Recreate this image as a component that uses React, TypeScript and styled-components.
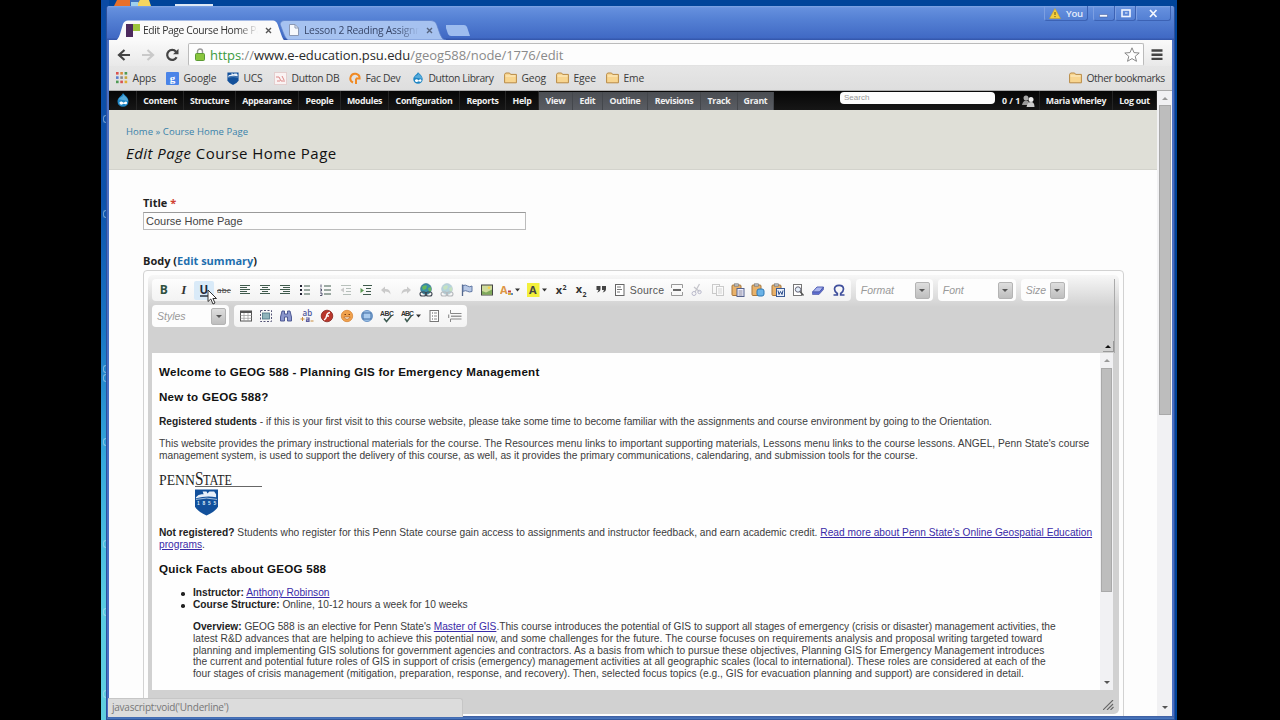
import React from 'react';
import styled, { createGlobalStyle, css } from 'styled-components';

const Global = createGlobalStyle`
  * { box-sizing: border-box; }
  html, body { margin: 0; padding: 0; background: #000; }
  body { width: 1280px; height: 720px; overflow: hidden; font-family: "Open Sans", "Noto Sans", sans-serif; }
  svg { display: block; flex: none; }
`;

/* ---------- desktop and window frame ---------- */
const Screen = styled.div`
  width: 1280px; height: 720px; background: #000; padding-left: 101px; overflow: hidden;
`;
const Desktop = styled.div`
  position: relative; width: 1076px; height: 720px; padding: 6px 0 0 5px; overflow: hidden;
  background: linear-gradient(90deg, transparent 8px, #00449a 8px),
    linear-gradient(#0a4aa4 0, #0c52ab 200px, #1976c4 330px, #35a9dc 460px, #58cbe2 600px, #5fcfe0 100%);
`;
const DesktopIcon = styled.svg` position: absolute; left: 13px; top: 0; `;
const DesktopLabel = styled.div` position: absolute; left: 74px; top: 4px; width: 38px; height: 2px; background: #dfe9f6; `;
const Speck = styled.i<{ $y: number }>`
  position: absolute; left: 2px; top: ${p => p.$y}px; width: 3px; height: 8px;
  border: 1px solid #c9e3f2; border-right: 0; border-radius: 3px 0 0 3px; opacity: .5;
`;
const Window = styled.div`
  position: relative; width: 1069px; height: 714px; display: flex; flex-direction: column;
  border: solid #2c4f9c; border-width: 0 1px; border-radius: 3px 3px 0 0; overflow: hidden;
  background: #4a70c4; padding: 0 2px 0 2px;
`;
const TitleBar = styled.div`
  flex: none; height: 34px; margin: 0 -2px; padding: 14px 0 0 8px; display: flex; align-items: flex-start; position: relative;
  background: linear-gradient(#7fa5e4 0, #6590de 2px, #5682d5 12px, #4069c4 32px, #3558ad 33px);
`;
const Tab = styled.div<{ $active?: boolean; $w: number }>`
  position: relative; width: ${p => p.$w}px; height: 20px; display: flex; align-items: center;
  padding: 0 0 0 11px; font-size: 10.3px; color: ${p => (p.$active ? '#333' : '#39486a')};
  z-index: ${p => (p.$active ? 2 : 1)};
  margin-left: ${p => (p.$active ? 0 : -7)}px;
`;
const TabShape = styled.svg` position: absolute; left: 0; top: 0; z-index: -1; `;
const TabIcon = styled.div<{ $gap: number }>` width: 14px; margin-right: ${p => p.$gap}px; `;
const TabTitle = styled.div<{ $w: number; $ls: number }>`
  width: ${p => p.$w}px; white-space: nowrap; overflow: hidden; letter-spacing: ${p => p.$ls}px;
  mask-image: linear-gradient(90deg, #000 82%, transparent);
`;
const TabClose = styled.svg` margin-left: 7px; `;
const WindowButtons = styled.div`
  position: absolute; right: 3px; top: 0; height: 15px; display: flex; color: #fff;
`;
const WinBtn = styled.div<{ $w: number; $gap?: number }>`
  width: ${p => p.$w}px; margin-right: ${p => p.$gap || 0}px; height: 15px; border: 1px solid #3c62b4; border-top: 0; border-left-color: #7c9fe2;
  border-radius: 0 0 3px 3px; display: flex; align-items: center; justify-content: center; gap: 5px;
  font-size: 9.6px; font-weight: 600; letter-spacing: -.2px; color: #e6eefb; padding-top: 1px;
`;

/* ---------- browser bars ---------- */
const AddressRow = styled.div`
  flex: none; height: 26px; display: flex; align-items: center; background: linear-gradient(#fafafa, #e9e9e9); padding: 3px 0 0 8px;
`;
const NavIcon = styled.svg` margin-right: 10px; `;
const Omnibox = styled.div`
  width: 956px; height: 23px; margin-left: -2px; border: 1px solid #bbb; border-bottom-color: #e2e2e2; border-radius: 2px; background: #fdfdfd;
  display: flex; align-items: center; padding: 0 3px 0 6px;
`;
const Url = styled.div`
  flex: 1; margin-left: 5px; font-size: 13px; line-height: 20px; letter-spacing: -.06px; color: #8a8a8a; white-space: nowrap;
  b { font-weight: 400; color: #3a9a3d; } em { font-style: normal; color: #2a2a2a; }
`;
const Bookmarks = styled.div`
  flex: none; height: 25px; background: linear-gradient(#e6e6e6, #dedede); display: flex; align-items: center;
  border-bottom: 1px solid #aaa; position: relative; padding-left: 7px;
`;
const Bookmark = styled.div<{ $w: number; $ls?: number }>`
  width: ${p => p.$w}px; display: flex; align-items: center; gap: 4.5px; font-size: 10.3px; color: #3b3b3b; white-space: nowrap;
  letter-spacing: ${p => p.$ls || 0}px;
`;
const Spacer = styled.div` flex: 1; `;

/* ---------- page ---------- */
const Viewport = styled.div` flex: 1; min-height: 0; display: flex; background: #fdfdfd; overflow: hidden; `;
const Page = styled.div` width: 1048px; flex: none; overflow: hidden; `;
const AdminBar = styled.div`
  height: 19px; display: flex; background: linear-gradient(#060606, #161616); color: #f0f0f0;
  font: 700 8.8px/20px "Open Sans", "Noto Sans", sans-serif; letter-spacing: -.3px; position: relative;
`;
const AdminHome = styled.div` width: 28px; padding: 2px 0 0 7px; border-right: 1px solid #252525; `;
const AdminItem = styled.div<{ $w: number; $tab?: boolean }>`
  width: ${p => p.$w}px; flex: none; text-align: center; white-space: nowrap;
  border-right: 1px solid #242424;
  ${p => p.$tab && css`background: linear-gradient(#4a4d52, #5a5d63); border-right-color: #44474c; height: 18px; margin-top: 1px; line-height: 18px;`}
`;
const SearchBox = styled.div`
  width: 155px; height: 12px; margin: 1px 7px 0 66px; border-radius: 4px; background: #fcfcfc; color: #999;
  font: 400 8px/12px "Liberation Sans", sans-serif; letter-spacing: 0; padding-left: 4px;
`;
const UserCount = styled.div` width: 38px; display: flex; gap: 2px; align-items: center; border-right: 1px solid #242424; letter-spacing: 0; `;
const PageHeader = styled.div`
  height: 60px; padding: 15px 0 0 17px; background: #dfdfd7; border-bottom: 1px solid #d3d3cc;
`;
const Crumb = styled.div` font-size: 9.5px; line-height: 13px; color: #3a82aa; letter-spacing: .05px; `;
const PageTitle = styled.div` margin-top: 5px; font-size: 15px; line-height: 20px; letter-spacing: .46px; color: #111; `;
const Form = styled.div` padding: 25px 34px 0 34px; `;
const Label = styled.div` font-size: 11px; line-height: 16px; font-weight: 700; color: #222; span { color: #d04030; } a { color: #1f6fae; } `;
const Input = styled.div`
  width: 383px; height: 18px; margin: 1px 0 23px; border: 1px solid #bcbcbc; border-top-color: #9a9a9a; padding-left: 2px; color: #444;
  font: 11px/16px "Liberation Sans", sans-serif; letter-spacing: 0;
`;

/* ---------- editor ---------- */
const EditorFrame = styled.div`
  margin-top: 1px; width: 981px; height: 460px; border: 1px solid #d2d2d2; border-radius: 4px; padding: 4px 4px 0; background: #fdfdfd;
`;
const EditorSkin = styled.div`
  height: 439px; border-radius: 5px; background: linear-gradient(#f7f7f7 0, #d1d1d1 32px, #d1d1d1 100%); padding: 4px 4px 0; 
`;
const ToolArea = styled.div` height: 74px; position: relative; border-right: 1px solid #aaa; `;
const ToolRow = styled.div` display: flex; gap: 5px; height: 22px; margin-bottom: 4px; `;
const Group = styled.div`
  height: 22px; border-radius: 4px; background: linear-gradient(#fdfdfd, #f3f3f3); display: flex; align-items: center; padding: 0 2px;
`;
const Tool = styled.div<{ $w: number; $hot?: boolean; $faded?: boolean }>`
  width: ${p => p.$w}px; height: 19px; display: flex; align-items: center; justify-content: center; gap: 4px; border-radius: 2px;
  opacity: ${p => (p.$faded ? 0.35 : 1)}; background: ${p => (p.$hot ? '#d9eaf8' : 'transparent')};
  font: 10.5px "Liberation Sans", sans-serif; letter-spacing: .2px; color: #555; white-space: nowrap;
`;
const Combo = styled.div<{ $w: number }>`
  width: ${p => p.$w}px; height: 22px; border-radius: 4px; background: #fdfdfd; display: flex; align-items: center; justify-content: space-between;
  padding: 0 3px 0 5px; font: italic 10.5px "Liberation Sans", sans-serif; letter-spacing: 0; color: #999;
`;
const ComboArrow = styled.div`
  width: 15px; height: 17px; border: 1px solid #b4b4b4; border-radius: 2px; background: linear-gradient(#dedede, #bebebe);
  display: flex; align-items: center; justify-content: center;
`;
const Down = styled.i` border: 3px solid transparent; border-top: 3px solid #555; border-bottom: 0; `;
const Up = styled.i<{ $c: string }>` border: 3px solid transparent; border-bottom: 3px solid ${p => p.$c}; border-top: 0; `;
const Collapse = styled.div`
  position: absolute; right: 0; bottom: 1px; width: 11px; height: 11px; border: solid #999; border-width: 0 1px 1px 0;
  display: flex; align-items: center; justify-content: center;
`;
const Canvas = styled.div`
  height: 337px; width: 961px; background: #fefefe; display: flex; overflow: hidden;
`;
const Doc = styled.div`
  width: 948px; padding: 11px 0 0 7px; color: #3c3c3c; font: 10.2px/11.9px "Liberation Sans", sans-serif;
  b { color: #222; } a { color: #3a2ba8; text-decoration: underline; }
`;
const Heading = styled.div<{ $mt?: number }>`
  font-size: 11.6px; line-height: 16px; font-weight: 700; color: #111; margin-top: ${p => p.$mt || 0}px; letter-spacing: .24px;
`;
const Para = styled.div<{ $mt: number; $indent?: number }>` margin-top: ${p => p.$mt}px; padding-left: ${p => p.$indent || 0}px; `;
const Line = styled.div<{ $ls?: number }>` height: 11.9px; white-space: nowrap; letter-spacing: ${p => p.$ls || 0}px; `;
const Item = styled(Line)`
  padding-left: 34px; position: relative;
  &::before { content: ''; position: absolute; left: 22px; top: 5px; width: 3.5px; height: 3.5px; border-radius: 50%; background: #222; }
`;
const Scroll = styled.div<{ $w: number }>`
  width: ${p => p.$w}px; flex: none; background: #f1f1f3; display: flex; flex-direction: column; align-items: center; 
`;
const ScrollEnd = styled.div<{ $h: number }>` height: ${p => p.$h}px; display: flex; align-items: center; `;
const Thumb = styled.div<{ $h: number; $w: number }>` width: ${p => p.$w}px; height: ${p => p.$h}px; background: #bdbdbd; border: 1px solid #a9a9a9; `;
const ResizeRow = styled.div` height: 22px; display: flex; justify-content: flex-end; align-items: flex-end; padding: 0 1px 2px 0; `;
const StatusBubble = styled.div`
  position: absolute; left: 1px; bottom: 3px; width: 355px; height: 19px; background: #dcdcdc; border: solid #c6c6c6; border-width: 1px 1px 0 0;
  border-radius: 0 3px 0 0; padding-left: 4px; font-size: 10px; line-height: 17px; letter-spacing: -.24px; color: #777; white-space: nowrap;
`;
const Cursor = styled.svg` position: absolute; left: 100px; top: 283px; z-index: 5; `;
const BottomEdge = styled.div` flex: none; height: 4px; margin: 0 -2px; background: linear-gradient(#3d5c9e, #4a78c0 60%, #24488c); `;

/* ---------- icon drawings ---------- */
const Drop = ({ s = 14 }: { s?: number }) => (
  <svg width={s} height={s} viewBox="0 0 14 14">
    <path d="M7 0C8 2 12.5 4 12.5 8.4A5.5 5.3 0 0 1 1.5 8.4C1.5 4.5 6 3 7 0Z" fill="#1f86c4" />
    <path d="M2.6 6.3C4 3.8 7 4.6 7.6 1.5 9 4 12 5 12 8Z" fill="#6cb9e4" opacity=".7" />
    <path d="M3.4 9.6C5 7.6 6.5 9 7.5 9.8 8.7 9 10 7.6 11 9.3 11.5 12 8.8 11.4 7.6 10.8 6 12 3.6 12.2 3.4 9.6Z" fill="#fff" />
  </svg>
);
const Folder = () => (
  <svg width="13" height="12" viewBox="0 0 13 12">
    <path d="M.6 10.8V2.3L1.6 1h4l1 1.4h5.8v8.4Z" fill="#f8d58f" stroke="#b98a45" /><path d="M1.5 4h10" stroke="#fdeec9" />
  </svg>
);
const Shield = ({ w, h }: { w: number; h: number }) => (
  <svg width={w} height={h} viewBox="0 0 24 28">
    <path d="M0 1H24V19Q21 24 12 28Q3 24 0 19Z" fill="#12509b" />
    <path d="M1 9Q4 5 9 6L8 3H12L13 5L15 3H20L22 6V9Q12 7 1 10Z" fill="#e8f0fa" />
    <path d="M1 11.3Q12 8.5 23 11.3" stroke="#cfe0f2" fill="none" strokeWidth=".8" />
    {w > 14 && <text x="2" y="17" fontSize="5" fontWeight="700" textLength="20" fill="#dbe8f6" fontFamily="Liberation Sans">1855</text>}
  </svg>
);
const PsuLogo = () => (
  <svg width="106" height="48" viewBox="0 0 106 48">
    <g fontFamily="Liberation Serif, serif" fill="#1e1e1e">
      <text x="0" y="14.5" fontSize="14.5" textLength="36" lengthAdjust="spacingAndGlyphs">PENN</text>
      <text x="36" y="14.5" fontSize="18" textLength="8.5" lengthAdjust="spacingAndGlyphs">S</text>
      <text x="44" y="14.5" fontSize="14.5" textLength="29" lengthAdjust="spacingAndGlyphs">TATE</text>
    </g>
    <path d="M36 16.5H103" stroke="#555" strokeWidth=".9" />
    <g transform="translate(36 18)"><Shield w={23} h={28} /></g>
  </svg>
);

const G = '#3f5a4c';
const S = ({ children, w = 14 }: { children: React.ReactNode; w?: number }) => (
  <svg width={w} height="14" viewBox={`0 0 ${w} 14`} fill="none" strokeWidth="1">{children}</svg>
);
const Letter = ({ t, x = 7, y = 11.2, size = 12, fill = '#333', weight = 700, italic = false, font = 'Open Sans' }: any) => (
  <text x={x} y={y} fontSize={size} fontWeight={weight} fontStyle={italic ? 'italic' : 'normal'} fill={fill} textAnchor="middle" fontFamily={font}>{t}</text>
);
const Clip = ({ badge }: { badge: React.ReactNode }) => (
  <S><rect x="1" y="2" width="9" height="10.5" rx="1" fill="#e9b26a" stroke="#a8763a" /><rect x="3.5" y=".8" width="4" height="2.4" fill="#bbb" stroke="#777" strokeWidth=".6" />{badge}</S>
);
const lines = (rows: [number, number, number][], c = G) => rows.map(([x1, x2, y]) => <path key={y} d={`M${x1} ${y}H${x2}`} stroke={c} />);
const Caret = ({ x }: { x: number }) => <path d={`M${x} 5.5h5l-2.5 3z`} fill="#333" />;

const icons: Record<string, React.ReactNode> = {
  bold: <S><Letter t="B" fill="#2f5040" /></S>,
  italic: <S><Letter t="I" italic font="Liberation Serif" size={13} /></S>,
  underline: <S><Letter t="U" fill="#1c2838" size={11.5} /><path d="M3 13H11" stroke="#1c2838" strokeWidth="1.4" /></S>,
  strike: <S><Letter t="abc" size={8} weight={400} y={9.5} /><path d="M0 7.500H14" stroke="#444" strokeWidth=".8" /></S>,
  left: <S>{lines([[2, 12, 2.5], [2, 9, 4.5], [2, 12, 6.5], [2, 9, 8.5], [2, 12, 10.5]])}</S>,
  center: <S>{lines([[2, 12, 2.5], [4, 10, 4.5], [2, 12, 6.5], [4, 10, 8.5], [2, 12, 10.5]])}</S>,
  right: <S>{lines([[2, 12, 2.5], [5, 12, 4.5], [2, 12, 6.5], [5, 12, 8.5], [2, 12, 10.5]])}</S>,
  bullets: <S>{lines([[6, 12, 3], [6, 12, 7], [6, 12, 11]])}<path d="M2 3h2M2 7h2M2 11h2" stroke="#223" strokeWidth="2" /></S>,
  numbers: <S>{lines([[6, 13, 3], [6, 13, 7], [6, 13, 11]])}<path d="M3 1.5v3M2 6h1.5v2H2M2 10h2v2.5H2" stroke="#335" strokeWidth=".8" /></S>,
  outdent: <S>{lines([[2, 12, 2.5], [7, 12, 5.5], [7, 12, 8.5], [4, 12, 11.5]])}<path d="M5 4.5v5L1.5 7z" fill="#777" /></S>,
  indent: <S>{lines([[4, 13, 2.5], [7, 12, 5.5], [7, 12, 8.5], [4, 12, 11.5]])}<path d="M1.5 5v5L5 7.5z" fill="#5a9a50" /></S>,
  undo: <S><path d="M2 7L6 3.5V6Q11.5 5.5 11.5 11.5Q10 8.3 6 8.5V10.7Z" fill="#777" /></S>,
  redo: <S><path d="M12 7L8 3.5V6Q2.500 5.5 2.500 11.5Q4 8.3 8 8.5V10.7Z" fill="#777" /></S>,
  link: <S><circle cx="7" cy="6" r="5.4" fill="#3a8fa8" stroke="#2a6478" strokeWidth=".6" /><path d="M3 4Q6 1 8 3L7 6 4 7ZM9 5L12 4V8L10 9Z" fill="#66b85a" /><rect x="1" y="9" width="6" height="4" rx="2" stroke="#3c4450" strokeWidth="1.1" /><rect x="7" y="9" width="6" height="4" rx="2" stroke="#3c4450" strokeWidth="1.100" /></S>,
  flag: <S><path d="M2.500 1.500V13" stroke="#55698c" strokeWidth="1.3" /><path d="M3 2.500Q5.500 1.500 7.500 3T12 3V8.500Q9 9.500 7.500 8.300T3 8.300Z" fill="#b8c9e6" stroke="#6178a4" /></S>,
  image: <S><rect x="1.500" y="2" width="11" height="10" fill="#cfdc9c" stroke="#444" /><path d="M2 11.500V8L6 9.500 12 6.500V11.500Z" fill="#7fa95c" /><circle cx="9" cy="4.800" r="1.300" fill="#f4d24f" /></S>,
  color: <S w={20}><text x="0" y="10.500" fontSize="11" fontWeight="700" fill="#dd9544" fontFamily="Open Sans">A</text><path d="M8 7.500h3v2H8z" fill="#b44" /><path d="M8 10h3v2H8z" fill="#d9b03a" /><path d="M11 10h2v2h-2z" fill="#5a8fc4" /><Caret x={15} /></S>,
  highlight: <S w={20}><rect width="12.500" height="14" fill="#f3f03c" /><text x="2" y="11" fontSize="11" fontWeight="700" fill="#444" fontFamily="Open Sans">A</text><Caret x={15} /></S>,
  sup: <S><Letter t="x" x={5} size={11} /><text x="8.500" y="6.500" fontSize="7" fontWeight="700" fill="#333" fontFamily="Open Sans">2</text></S>,
  sub: <S><Letter t="x" x={5} y={10.2} size={11} /><text x="8.500" y="13.500" fontSize="7" fontWeight="700" fill="#333" fontFamily="Open Sans">2</text></S>,
  quote: <S><path d="M2.500 3H6.500V6Q6.500 8.500 3 9.500 4.500 8 4.400 7H2.500ZM8 3H12V6Q12 8.500 8.500 9.500 10 8 9.900 7H8Z" fill="#444" /></S>,
  source: <><S w={12}><rect x="1.500" y="1.500" width="8.500" height="11" stroke="#666" fill="#fff" />{lines([[3, 7, 4], [3, 8, 6.5], [3, 6, 9]], '#777')}</S>Source</>,
  rule: <S><path d="M1.500 5V1.500H12.500V5M1.500 9V12.500H12.500V9" stroke="#999" /><path d="M3 7H11" stroke="#444" strokeWidth="1.600" /></S>,
  cut: <S><path d="M9.500 1L5 9M4 4L9.500 8.500" stroke="#667" strokeWidth="1.300" /><circle cx="4" cy="10.500" r="2" stroke="#447" /><circle cx="9.500" cy="9" r="1.700" stroke="#447" /></S>,
  copy: <S><rect x="1.500" y="1.500" width="7" height="9" stroke="#777" /><rect x="5.500" y="3.500" width="7" height="9" fill="#fff" stroke="#777" />{lines([[7, 11, 6], [7, 11, 8], [7, 11, 10]], '#999')}</S>,
  paste: <Clip badge={<><rect x="6" y="5.500" width="7" height="8" fill="#eef" stroke="#55628c" />{lines([[7.5, 11.5, 8], [7.5, 11.5, 10], [7.5, 11.5, 12]], '#889')}</>} />,
  pasteText: <Clip badge={<rect x="6" y="6" width="7" height="7" rx="2" fill="#6ab2e6" stroke="#2f78b4" />} />,
  pasteWord: <Clip badge={<><rect x="5.500" y="5.500" width="8" height="8" fill="#e8effa" stroke="#3a5a94" /><path d="M7 7.500l1 4 1.500-3 1.500 3 1-4" stroke="#2b4c8c" /></>} />,
  preview: <S><rect x="2.500" y="1.500" width="8" height="11" fill="#fff" stroke="#777" /><circle cx="7" cy="6.500" r="2.700" stroke="#667" fill="#e4eefa" /><path d="M9 8.500L12.500 12.500" stroke="#555" strokeWidth="1.500" /></S>,
  eraser: <S><path d="M1.500 9L6 4H12.500L8.500 9Z" fill="#a9b4ee" stroke="#5260b4" /><path d="M1.500 9V11.500H8L12.500 6.500V4L8.500 9Z" fill="#5f6ed0" stroke="#4450a0" strokeWidth=".6" /></S>,
  omega: <S><path d="M1.500 12H5.300V10.500Q2.500 8.500 2.500 6Q2.700 2.500 7 2.400T11.500 6Q11.500 8.500 8.700 10.500V12H12.500" stroke="#3f4f9c" strokeWidth="1.700" /></S>,
  table: <S><rect x="1.500" y="2" width="11" height="10" fill="#fff" stroke="#555" /><path d="M1.500 3H12.500" stroke="#555" strokeWidth="2" /><path d="M1.500 6.500h11M1.500 9.300h11M5 4v8M9 4v8" stroke="#999" strokeWidth=".7" /></S>,
  div: <S><rect x="1.500" y="1.500" width="11" height="11" stroke="#557" strokeDasharray="2 1.500" /><rect x="3.500" y="4" width="7" height="6" fill="#8fb4bc" stroke="#4a7484" strokeWidth=".8" /></S>,
  find: <S><path d="M3 2h2.500v3h3V2H11l1.500 6v4H8.500V8h-3v4H1.500V8Z" fill="#8a96cc" stroke="#434f8c" strokeWidth=".9" /></S>,
  replace: <S><text x="2.500" y="6.500" fontSize="8" fontWeight="600" fill="#4a559c" fontFamily="Open Sans">ab</text><path d="M2.500 8v4M.5 10h4M10.500 12h3" stroke="#c88a3a" /><path d="M6 9h3v3.500H6.500V10.800H9" stroke="#5a5a9c" strokeWidth="1.200" /></S>,
  flash: <S><circle cx="7" cy="7" r="5.800" fill="#b9372c" stroke="#86251e" strokeWidth=".8" /><path d="M10 3.500Q7 3.800 6.500 7T4 10.800M6.500 7H9" stroke="#fff" strokeWidth="1.400" /></S>,
  smiley: <S><circle cx="7" cy="7" r="5.700" fill="#f0a14c" stroke="#d8863a" strokeWidth=".8" /><path d="M4.500 5.500h1.500M8.500 5.500H10" stroke="#7a3c14" /><path d="M3.800 8Q7 12.500 10.200 8Z" fill="#fff0d8" stroke="#a4521c" strokeWidth=".6" /></S>,
  iframe: <S><circle cx="7" cy="7" r="5.500" fill="#9cc0e6" stroke="#6d97c8" /><rect x="3" y="4" width="8" height="6" fill="#a9cbee" stroke="#3f6ca4" /></S>,
  spell: <S><text x="0" y="7" fontSize="6.800" fontWeight="700" textLength="14" fill="#333" fontFamily="Liberation Sans">ABC</text><path d="M4 9.500L6.500 12.500L11.500 6.500" stroke="#3c5a50" strokeWidth="1.500" /></S>,
  scayt: <S w={20}><text x="0" y="7" fontSize="6.800" fontWeight="700" textLength="13" fill="#333" fontFamily="Liberation Sans">ABC</text><path d="M4 9.500L6 12.500L10.500 6.500" stroke="#3c5a50" strokeWidth="1.500" /><Caret x={15} /></S>,
  template: <S><rect x="3" y="1.500" width="8.500" height="11" fill="#fff" stroke="#777" />{lines([[5, 6, 4], [5, 6, 7], [5, 6, 10]], '#555')}{lines([[7, 10, 4.01], [7, 10, 7.01], [7, 10, 10.01]], '#888')}</S>,
  pageBreak: <S><path d="M2.500 1V4.500H13.500M2.500 13V10H13.500" stroke="#888" /><path d="M.5 5.500V9M3 7.200H13.500" stroke="#999" strokeWidth="1.600" /></S>,
};

type ToolDef = [string, number, ('hot' | 'faded')?];
const rowOne: ToolDef[] = [
  ['bold', 20.2], ['italic', 20], ['underline', 20.2, 'hot'], ['strike', 20.2], ['left', 20.2], ['center', 20.2], ['right', 20.2], ['bullets', 20.2],
  ['numbers', 20.2], ['outdent', 20.2, 'faded'], ['indent', 20.2], ['undo', 20.2, 'faded'], ['redo', 20.2, 'faded'], ['link', 20.2], ['link', 20.2, 'faded'],
  ['flag', 20.2], ['image', 20.2], ['color', 26.500], ['highlight', 27], ['sup', 20.2], ['sub', 20.2], ['quote', 20.2], ['source', 56], ['rule', 20.2],
  ['cut', 20.2, 'faded'], ['copy', 20.2, 'faded'], ['paste', 20.2], ['pasteText', 20.2], ['pasteWord', 20.2], ['preview', 20.2], ['eraser', 20.2], ['omega', 20.2],
];
const rowTwo: ToolDef[] = [
  ['table', 20.2], ['div', 20.2], ['find', 20.2], ['replace', 20.2], ['flash', 20.2], ['smiley', 20.2], ['iframe', 20.2], ['spell', 20.2],
  ['scayt', 26.500], ['template', 20.2], ['pageBreak', 21],
];
const Tools = ({ list }: { list: ToolDef[] }) => (
  <Group>{list.map(([n, w, s], i) => <Tool key={i} $w={w} $hot={s === 'hot'} $faded={s === 'faded'}>{icons[n]}</Tool>)}</Group>
);
const Select = ({ w, children }: { w: number; children: string }) => <Combo $w={w}>{children}<ComboArrow><Down /></ComboArrow></Combo>;

const adminItems: [string, number, boolean?][] = [
  ['Content', 47], ['Structure', 52], ['Appearance', 63], ['People', 42], ['Modules', 48], ['Configuration', 71], ['Reports', 46], ['Help', 33],
  ['View', 34, true], ['Edit', 30, true], ['Outline', 45, true], ['Revisions', 53, true], ['Track', 37, true], ['Grant', 36, true],
];

export default function App() {
  return (
    <Screen>
      <Global />
      <Desktop>
        <DesktopIcon width="38" height="6"><circle cx="18" cy="-6" r="14" fill="#3b6fc0" /><path d="M0 6L3 0H16V6Z" fill="#e8702a" /><path d="M26 0h9l2 6H22Z" fill="#f4d560" /><path d="M17 2h7v4h-7z" fill="#9fd0ee" /></DesktopIcon>
        <DesktopLabel />
        {[115, 210, 365, 374, 438, 540, 608, 690].map(y => <Speck key={y} $y={y} />)}
        <Window>
          <TitleBar>
            <Tab $active $w={170}>
              <TabShape width="170" height="21"><path d="M0 21Q3 20 5 14L8 4Q9.500 .5 13 .5H158Q161 .5 162.500 4L166 14Q168 20 170 21Z" fill="#fafafa" /></TabShape>
              <TabIcon $gap={3}><svg width="14" height="13"><path d="M0 0h7v13H0z" fill="#4d2a5e" /><path d="M7 0h7v7H7z" fill="#9cc53c" /></svg></TabIcon>
              <TabTitle $w={115} $ls={-0.36}>Edit Page Course Home Page</TabTitle>
              <TabClose width="7" height="7"><path d="M1 1L6 6M6 1L1 6" stroke="#555" strokeWidth="1.400" /></TabClose>
            </Tab>
            <Tab $w={168}>
              <TabShape width="168" height="20"><path d="M2 4Q3 .5 6 .5H153Q157 .5 158.500 4L162 14Q164 20 168 20H10Q7 18 5 12Z" fill="#a6c2f0" stroke="#5b7fc8" strokeWidth=".7" /></TabShape>
              <TabIcon $gap={1}><svg width="10" height="12"><path d="M.5 .5h5.500L9.500 4v7.500h-9z" fill="#f6f8fc" stroke="#8a98b4" /><path d="M6 .5V4h3.500" fill="none" stroke="#8a98b4" /></svg></TabIcon>
              <TabTitle $w={115} $ls={-0.25}>Lesson 2 Reading Assignment</TabTitle>
              <TabClose width="7" height="7"><path d="M1 1L6 6M6 1L1 6" stroke="#56647f" strokeWidth="1.400" /></TabClose>
            </Tab>
            <svg width="28" height="20"><path d="M-1 5H18Q20 5 21 7L24 16H5Q3 16 2 14Z" fill="#9dbcee" /></svg>
            <WindowButtons>
              <WinBtn $w={44} $gap={5}><svg width="12" height="11"><path d="M6 .5L11.500 10.500H.5Z" fill="#f2cf3f" stroke="#c8a020" strokeWidth=".5" /><path d="M6 4v3M6 8v1.200" stroke="#6a5210" /></svg>You</WinBtn>
              <WinBtn $w={22}><svg width="10" height="8"><path d="M.5 4.500h8v2.500h-8z" fill="#f4f8ff" stroke="#3a5594" strokeWidth=".5" /></svg></WinBtn>
              <WinBtn $w={21}><svg width="10" height="9"><rect x="1" y="1" width="8" height="6.500" fill="none" stroke="#f0f5ff" strokeWidth="1.600" /><path d="M4 4h2.500" stroke="#f0f5ff" /></svg></WinBtn>
              <WinBtn $w={35}><svg width="9" height="9"><path d="M1 1L7.500 8M7.500 1L1 8" stroke="#f4f8ff" strokeWidth="1.700" /></svg></WinBtn>
            </WindowButtons>
          </TitleBar>
          <AddressRow>
            <NavIcon width="14" height="14"><path d="M7.500 2L2 7L7.500 12M2 7H13" fill="none" stroke="#444" strokeWidth="2.200" /></NavIcon>
            <NavIcon width="14" height="14"><path d="M6.500 2L12 7L6.500 12M12 7H1" fill="none" stroke="#c9c9c9" strokeWidth="2.200" /></NavIcon>
            <NavIcon width="15" height="14"><path d="M11.600 9.300A5 5 0 1 1 11 3.700" fill="none" stroke="#444" strokeWidth="2.200" /><path d="M13.500 .8V6.200H8Z" fill="#444" /></NavIcon>
            <Omnibox>
              <svg width="10" height="13"><path d="M2.500 6V3.500a2.500 2.500 0 0 1 5 0V6" fill="none" stroke="#9a9a9a" strokeWidth="1.400" /><rect x=".5" y="5.500" width="9" height="7" rx="1" fill="#8ac53e" stroke="#5a9a35" /></svg>
              <Url><b>https</b>://<em>www.e-education.psu.edu</em>/geog588/node/1776/edit</Url>
              <svg width="16" height="15"><path d="M8 .8L10 5.600 15.200 6 11.200 9.300 12.500 14.300 8 11.600 3.500 14.300 4.800 9.300 .8 6 6 5.600Z" fill="#fff" stroke="#888" /></svg>
            </Omnibox>
            <svg width="26" height="12"><path d="M7.500 1.500H18.500M7.500 5.700H18.500M7.500 9.900H18.500" stroke="#444" strokeWidth="2.400" /></svg>
          </AddressRow>
          <Bookmarks>
            <Bookmark $w={50} $ls={-0.1}><svg width="12" height="12">{[0, 1, 2].map(r => [0, 1, 2].map(c => <rect key={`${r}${c}`} x={c * 4.300} y={r * 4.300} width="2.600" height="2.600" fill={['#d9534f', '#d98b3a', '#4f9a55', '#5a7fd0', '#888', '#c9a63b', '#4f9a55', '#d9534f', '#e0b030'][r * 3 + c]} />))}</svg>Apps</Bookmark>
            <Bookmark $w={61} $ls={-0.15}><svg width="13" height="13"><rect width="13" height="13" rx="1" fill="#4a84e8" /><text x="6.500" y="10" fontSize="11" fontWeight="700" textAnchor="middle" fill="#fff" fontFamily="Liberation Serif">g</text></svg>Google</Bookmark>
            <Bookmark $w={47} $ls={-0.3}><Shield w={12} h={13} />UCS</Bookmark>
            <Bookmark $w={75} $ls={-0.3}><svg width="13" height="13"><rect x=".5" y=".5" width="12" height="12" fill="#faf3f3" stroke="#e4cfcf" /><path d="M2 5h3l2 4h4M3 9h3M8 4l2 4" stroke="#d88" fill="none" /></svg>Dutton DB</Bookmark>
            <Bookmark $w={63} $ls={-0.3}><svg width="12" height="13"><path d="M4 10.500A4.600 4.600 0 1 1 10.600 6.500H7M7 6.500V12" fill="none" stroke="#f08a24" strokeWidth="2" /></svg>Fac Dev</Bookmark>
            <Bookmark $w={92} $ls={-0.35}><Drop s={12} />Dutton Library</Bookmark>
            <Bookmark $w={52} $ls={-0.15}><Folder />Geog</Bookmark>
            <Bookmark $w={50} $ls={-0.15}><Folder />Egee</Bookmark>
            <Bookmark $w={50} $ls={-0.15}><Folder />Eme</Bookmark>
            <Spacer />
            <Bookmark $w={103} $ls={-0.42}><Folder />Other bookmarks</Bookmark>
          </Bookmarks>
          <Viewport>
            <Page>
              <AdminBar>
                <AdminHome><Drop s={14} /></AdminHome>
                {adminItems.map(([t, w, tab]) => <AdminItem key={t} $w={w} $tab={tab}>{t}</AdminItem>)}
                <SearchBox>Search</SearchBox>
                <UserCount>0 / 1<svg width="13" height="12"><circle cx="4" cy="3" r="2.500" fill="#aaa" /><circle cx="9" cy="4.500" r="2.500" fill="#eee" /><path d="M0 10Q1 5.500 4 5.500T7 8V10Z" fill="#999" /><path d="M4.500 12Q5.500 7 9 7T12.500 12Z" fill="#ccc" /></svg></UserCount>
                <AdminItem $w={73}>Maria Wherley</AdminItem>
                <AdminItem $w={44}>Log out</AdminItem>
              </AdminBar>
              <PageHeader>
                <Crumb>Home » Course Home Page</Crumb>
                <PageTitle><i>Edit Page</i> Course Home Page</PageTitle>
              </PageHeader>
              <Form>
                <Label>Title <span>*</span></Label>
                <Input>Course Home Page</Input>
                <Label>Body (<a>Edit summary</a>)</Label>
                <EditorFrame>
                  <EditorSkin>
                    <ToolArea>
                      <ToolRow>
                        <Tools list={rowOne} />
                        <Select w={77}>Format</Select><Select w={78}>Font</Select><Select w={47}>Size</Select>
                      </ToolRow>
                      <ToolRow><Select w={77}>Styles</Select><Tools list={rowTwo} /></ToolRow>
                      <Collapse><Up $c="#111" /></Collapse>
                    </ToolArea>
                    <Canvas>
                      <Doc>
                        <Heading>Welcome to GEOG 588 - Planning GIS for Emergency Management</Heading>
                        <Heading $mt={9}>New to GEOG 588?</Heading>
                        <Para $mt={11}><Line><b>Registered students</b> - if this is your first visit to this course website, please take some time to become familiar with the assignments and course environment by going to the Orientation.</Line></Para>
                        <Para $mt={10}>
                          <Line $ls={0.022}>This website provides the primary instructional materials for the course. The Resources menu links to important supporting materials, Lessons menu links to the course lessons. ANGEL, Penn State's course</Line>
                          <Line>management system, is used to support the delivery of this course, as well, as it provides the primary communications, calendaring, and submission tools for the course.</Line>
                        </Para>
                        <Para $mt={8}><PsuLogo /></Para>
                        <Para $mt={9}>
                          <Line $ls={0.015}><b>Not registered?</b> Students who register for this Penn State course gain access to assignments and instructor feedback, and earn academic credit. <a>Read more about Penn State's Online Geospatial Education</a></Line>
                          <Line><a>programs</a>.</Line>
                        </Para>
                        <Heading $mt={11}>Quick Facts about GEOG 588</Heading>
                        <Para $mt={10}>
                          <Item><b>Instructor:</b> <a>Anthony Robinson</a></Item>
                          <Item><b>Course Structure:</b> Online, 10-12 hours a week for 10 weeks</Item>
                        </Para>
                        <Para $mt={9.5} $indent={34}>
                          <Line $ls={-0.015}><b>Overview:</b> GEOG 588 is an elective for Penn State's <a>Master of GIS</a>.This course introduces the potential of GIS to support all stages of emergency (crisis or disaster) management activities, the</Line>
                          <Line $ls={0.055}>latest R&amp;D advances that are helping to achieve this potential now, and some challenges for the future. The course focuses on requirements analysis and proposal writing targeted toward</Line>
                          <Line $ls={0.033}>planning and implementing GIS solutions for government agencies and contractors. As a basis from which to pursue these objectives, Planning GIS for Emergency Management introduces</Line>
                          <Line $ls={0.027}>the current and potential future roles of GIS in support of crisis (emergency) management activities at all geographic scales (local to international). These roles are considered at each of the</Line>
                          <Line $ls={0.02}>four stages of crisis management (mitigation, preparation, response, and recovery). Then, selected focus topics (e.g., GIS for evacuation planning and support) are considered in detail.</Line>
                        </Para>
                      </Doc>
                      <Scroll $w={13}>
                        <ScrollEnd $h={15}><Up $c="#999" /></ScrollEnd><Thumb $w={11} $h={224} /><Spacer /><ScrollEnd $h={16}><Down /></ScrollEnd>
                      </Scroll>
                    </Canvas>
                    <ResizeRow><svg width="11" height="10"><path d="M0 10L10 0M4 10L10 4M7.500 10L10.500 7" stroke="#666" strokeWidth="1.100" /></svg></ResizeRow>
                  </EditorSkin>
                </EditorFrame>
              </Form>
            </Page>
            <Scroll $w={15}>
              <ScrollEnd $h={14}><Up $c="#999" /></ScrollEnd><Thumb $w={12} $h={310} /><Spacer /><ScrollEnd $h={17}><Down /></ScrollEnd>
            </Scroll>
          </Viewport>
          <BottomEdge />
          <StatusBubble>javascript:void('Underline')</StatusBubble>
          <Cursor width="11" height="16"><path d="M1 1V12.500L3.800 10L6 15L8 14L5.900 9.500H9.500Z" fill="#fff" stroke="#333" /></Cursor>
        </Window>
      </Desktop>
    </Screen>
  );
}
